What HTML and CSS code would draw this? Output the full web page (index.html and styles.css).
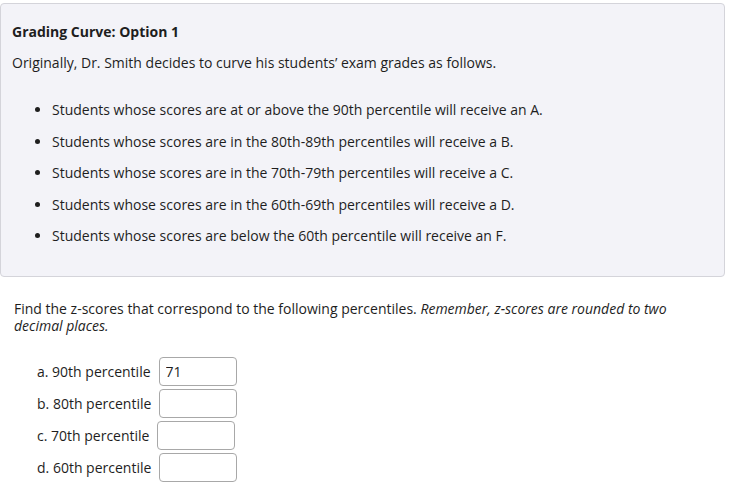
FILE: index.html
```html
<!DOCTYPE html>
<html lang="en">
<head>
    <meta charset="UTF-8">
    <title>Grading Curve</title>
    <link rel="stylesheet" href="styles.css">
</head>
<body>
    <div class="intro-box">
        <h2 class="intro-title">Grading Curve: Option 1</h2>
        <p class="intro-text">Originally, Dr. Smith decides to curve his students’ exam grades as follows.</p>
        <ul class="grade-list">
            <li>Students whose scores are at or above the 90th percentile will receive an A.</li>
            <li>Students whose scores are in the 80th-89th percentiles will receive a B.</li>
            <li>Students whose scores are in the 70th-79th percentiles will receive a C.</li>
            <li>Students whose scores are in the 60th-69th percentiles will receive a D.</li>
            <li>Students whose scores are below the 60th percentile will receive an F.</li>
        </ul>
    </div>

    <p class="question">Find the z-scores that correspond to the following percentiles. <em>Remember, z-scores are rounded to two decimal places.</em></p>

    <div class="answers">
        <label class="answer-row">a. 90th percentile <input type="text" class="answer-input" value="71"></label>
        <label class="answer-row">b. 80th percentile <input type="text" class="answer-input"></label>
        <label class="answer-row">c. 70th percentile <input type="text" class="answer-input"></label>
        <label class="answer-row">d. 60th percentile <input type="text" class="answer-input"></label>
    </div>
</body>
</html>
```

FILE: styles.css
```css
body {
    font-family: "Open Sans", Arial, sans-serif;
    font-size: 14px;
    color: #1e1e1e;
    margin: 0;
    padding: 3px 5px 0 0;
    background-color: white;
}
.intro-box {
    background-color: #f3f3f8;
    border: 1px solid #d4d4da;
    border-radius: 4px;
    padding: 14px 11px 31px;
}
.intro-title {
    font-size: 14px;
    font-weight: bold;
    margin: 0;
    line-height: 28px;
}
.intro-text {
    margin: 3px 0 0;
    line-height: 28px;
}
.grade-list {
    display: flex;
    flex-direction: column;
    gap: 13.5px;
    margin: 24px 0 0;
    padding-left: 40px;
}
.grade-list li {
    line-height: 18px;
}
.question {
    margin: 23px 0 0 14px;
    line-height: 17px;
    padding-right: 40px;
}
.answers {
    display: flex;
    flex-direction: column;
    gap: 3px;
    margin: 23px 0 0 37px;
}
.answer-row {
    display: flex;
    align-items: center;
    gap: 8px;
}
.answer-input {
    width: 78px;
    height: 29px;
    box-sizing: border-box;
    border: 1px solid #a8a8a8;
    border-radius: 4px;
    padding: 0 6px;
    font-family: inherit;
    font-size: 14px;
    color: #1e1e1e;
    background: white;
}
```
